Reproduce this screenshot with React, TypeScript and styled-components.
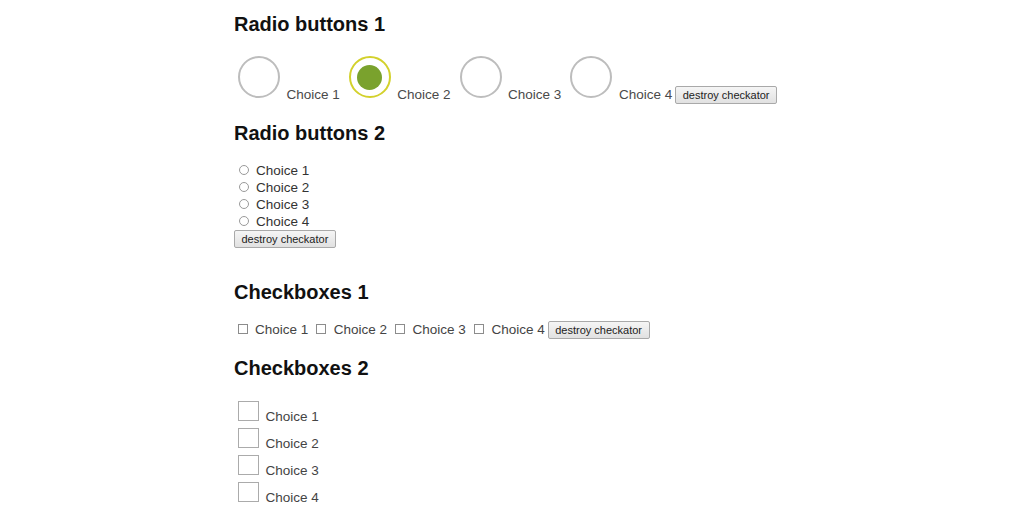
import styled, { createGlobalStyle } from "styled-components";

const GlobalStyle = createGlobalStyle`
  html, body {
    margin: 0;
    padding: 0;
    background: #ffffff;
    font-family: "Liberation Sans", Arial, sans-serif;
  }
`;

const choices = ["Choice 1", "Choice 2", "Choice 3", "Choice 4"];

const App = () => {
  return (
    <>
      <GlobalStyle />
      <Page>
        <Heading $top={12}>Radio buttons 1</Heading>
        <BigRadioRow>
          {choices.map((c, i) => (
            <BigRadioChoice key={c}>
              <BigRadio $checked={i === 1} />
              <BigRadioLabel>{c}</BigRadioLabel>
            </BigRadioChoice>
          ))}
          <DestroyButton $inline>destroy checkator</DestroyButton>
        </BigRadioRow>

        <Heading $top={17}>Radio buttons 2</Heading>
        <RadioList>
          {choices.map((c) => (
            <RadioLine key={c}>
              <SmallRadio />
              <ListLabel>{c}</ListLabel>
            </RadioLine>
          ))}
        </RadioList>
        <DestroyButton>destroy checkator</DestroyButton>

        <Heading $top={32}>Checkboxes 1</Heading>
        <CheckRow>
          {choices.map((c) => (
            <CheckChoice key={c}>
              <SmallBox />
              <RowLabel>{c}</RowLabel>
            </CheckChoice>
          ))}
          <DestroyButton $inline>destroy checkator</DestroyButton>
        </CheckRow>

        <Heading $top={17}>Checkboxes 2</Heading>
        <BoxList>
          {choices.map((c) => (
            <BoxLine key={c}>
              <BigBox />
              <RowLabel>{c}</RowLabel>
            </BoxLine>
          ))}
        </BoxList>
      </Page>
    </>
  );
};

export default App;

const Page = styled.main`
  width: 556px;
  margin: 0 auto;
  display: flex;
  flex-direction: column;
  align-items: flex-start;
`;

const Heading = styled.h2<{ $top: number }>`
  margin: ${({ $top }) => $top}px 0 0;
  font-size: 20px;
  line-height: 24px;
  font-weight: bold;
  color: #111111;
`;

const BigRadioRow = styled.div`
  display: flex;
  align-items: baseline;
  margin-top: 21px;
`;

const BigRadioChoice = styled.label`
  display: flex;
  align-items: baseline;

  & + & {
    margin-left: 9px;
  }

  &:first-child {
    margin-left: 4px;
  }
`;

const BigRadio = styled.span<{ $checked?: boolean }>`
  position: relative;
  top: -1px;
  display: block;
  box-sizing: border-box;
  width: 42px;
  height: 42px;
  margin-right: 6.5px;
  border-radius: 50%;
  border: 2px solid ${({ $checked }) => ($checked ? "#d3d12c" : "#bdbdbd")};

  &::after {
    content: "";
    display: ${({ $checked }) => ($checked ? "block" : "none")};
    position: absolute;
    left: 6.5px;
    top: 6.5px;
    width: 25px;
    height: 25px;
    border-radius: 50%;
    background: #7aa22d;
  }
`;

const BigRadioLabel = styled.span`
  font-size: 13.5px;
  line-height: 17px;
  color: #4a4a4a;
`;

const DestroyButton = styled.button<{ $inline?: boolean }>`
  box-sizing: border-box;
  margin: ${({ $inline }) => ($inline ? "0 0 0 3px" : "0")};
  padding: 1px 6.5px;
  height: 18px;
  border: 1px solid #a9a9a9;
  border-radius: 2px;
  background: linear-gradient(#f5f5f5, #e1e1e1);
  font-family: "Liberation Sans", Arial, sans-serif;
  font-size: 11px;
  line-height: 14px;
  color: #222222;
`;

const RadioList = styled.div`
  display: flex;
  flex-direction: column;
  margin-top: 17px;
`;

const RadioLine = styled.label`
  display: flex;
  align-items: baseline;
`;

const SmallRadio = styled.span`
  display: block;
  box-sizing: border-box;
  width: 10px;
  height: 10px;
  margin: 0 7px 0 5px;
  border-radius: 50%;
  border: 1px solid #9a9a9a;
`;

const ListLabel = styled.span`
  font-size: 13.5px;
  line-height: 17px;
  color: #333333;
`;

const CheckRow = styled.div`
  display: flex;
  align-items: baseline;
  margin-top: 17px;
`;

const CheckChoice = styled.label`
  display: flex;
  align-items: baseline;

  & + & {
    margin-left: 8px;
  }

  &:first-child {
    margin-left: 3.5px;
  }
`;

const SmallBox = styled.span`
  display: block;
  box-sizing: border-box;
  width: 10px;
  height: 10px;
  margin-right: 7.5px;
  border: 1px solid #8c8c8c;
`;

const RowLabel = styled.span`
  font-size: 13.5px;
  line-height: 17px;
  color: #444444;
`;

const BoxList = styled.div`
  display: flex;
  flex-direction: column;
  margin-top: 20.5px;
`;

const BoxLine = styled.label`
  display: flex;
  align-items: baseline;
  margin-bottom: 3px;
`;

const BigBox = styled.span`
  display: block;
  box-sizing: border-box;
  width: 21px;
  height: 20px;
  margin: 0 6.5px 0 4px;
  border: 1px solid #ababab;
`;
